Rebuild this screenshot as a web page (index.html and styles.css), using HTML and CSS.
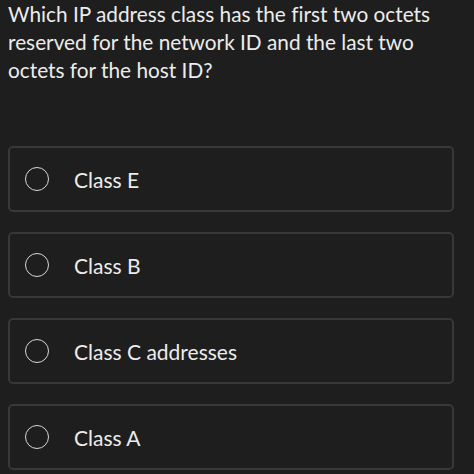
FILE: index.html
```html
<!DOCTYPE html>
<html lang="en">
<head>
    <meta charset="UTF-8">
    <title>Quiz</title>
    <link rel="stylesheet" href="styles.css">
</head>
<body>
    <div class="quiz">
        <p class="question">Which IP address class has the first two octets reserved for the network ID and the last two octets for the host ID?</p>
        <ul class="options">
            <li class="option"><span class="radio"></span><span class="label">Class E</span></li>
            <li class="option"><span class="radio"></span><span class="label">Class B</span></li>
            <li class="option"><span class="radio"></span><span class="label">Class C addresses</span></li>
            <li class="option"><span class="radio"></span><span class="label">Class A</span></li>
        </ul>
    </div>
</body>
</html>
```
FILE: styles.css
```css
body {
    margin: 0;
    background-color: #1e1e1e;
    color: #ececec;
    font-family: Lato, "Noto Sans", sans-serif;
    font-variant-ligatures: none;
}

.quiz {
    padding: 0 20px 0 8px;
}

.question {
    margin: 0;
    font-size: 20.8px;
    line-height: 28px;
    max-width: 440px;
}

.options {
    list-style: none;
    margin: 62px 0 0 0;
    padding: 0;
    display: flex;
    flex-direction: column;
    gap: 20px;
}

.option {
    display: flex;
    align-items: center;
    height: 62px;
    border: 2px solid #383838;
    border-radius: 5px;
    padding-left: 15px;
}

.radio {
    width: 22px;
    height: 22px;
    border: 1.5px solid #d8d8d8;
    border-radius: 50%;
}

.label {
    margin-left: 25px;
    font-size: 21px;
}
```
